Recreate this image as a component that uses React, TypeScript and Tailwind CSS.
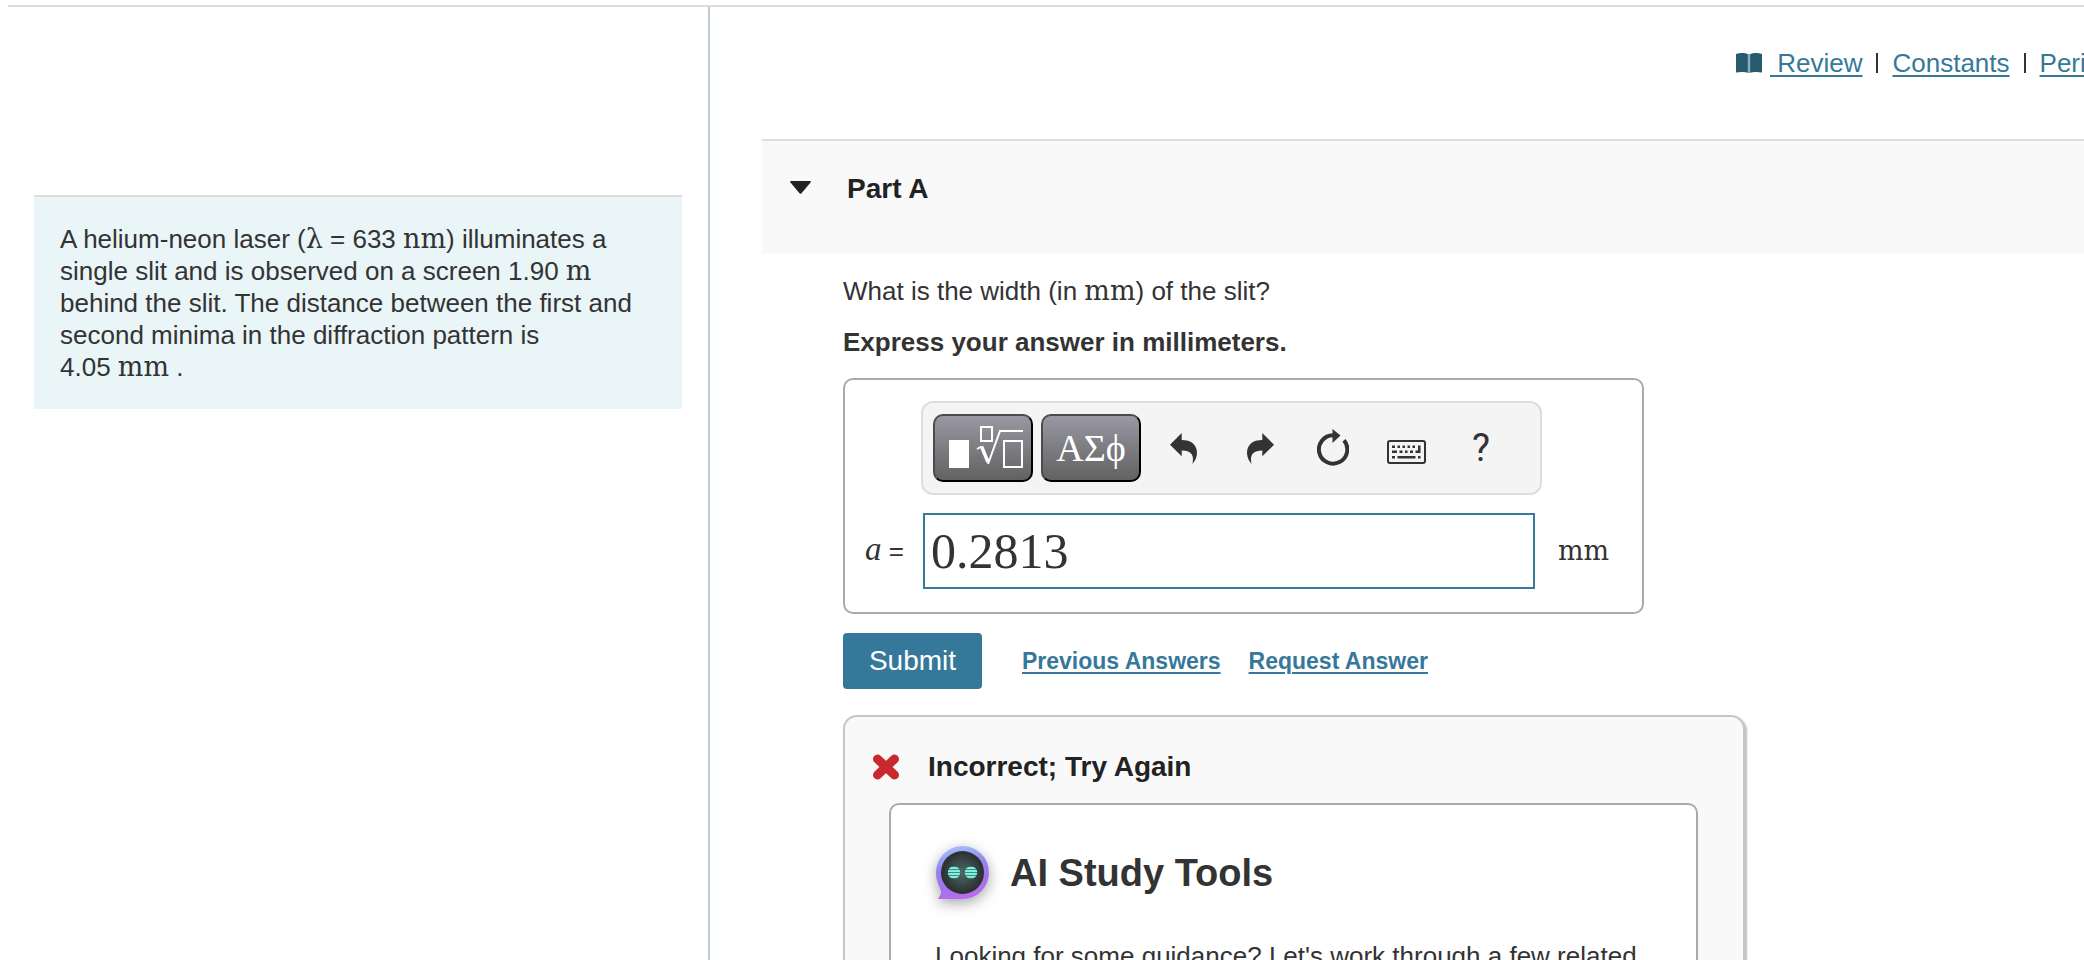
import { useState } from "react";
import type { ReactNode } from "react";

interface IToolButton {
  label: string;
  children: ReactNode;
  className?: string;
}

function Unit({ children }: { children: ReactNode }) {
  return (
    <span className="font-['DejaVu_Serif',serif] text-[27px] leading-none">
      {children}
    </span>
  );
}

function BookIcon() {
  return (
    <svg viewBox="0 0 26 20" className="w-[26px] h-5" fill="#265a6e">
      <path d="M0 1C4-.3 9-.3 12.300 1.500V20C9 18.600 4 18.600 0 19.600Z" />
      <path d="M26 1C22-.3 17-.3 13.700 1.500V20C17 18.600 22 18.600 26 19.600Z" />
      <path d="M13 1V20" stroke="#8fadb9" strokeWidth="2.400" />
    </svg>
  );
}

function TemplatesIcon() {
  return (
    <svg
      viewBox="0 0 96 64"
      className="w-24 h-16"
      fill="none"
      stroke="#fff"
      strokeWidth="2"
    >
      <rect x="14" y="24" width="20" height="28" fill="#fff" stroke="none" />
      <rect x="46" y="11" width="11" height="14" />
      <path d="M42 33L46.500 30.500" />
      <path d="M46.500 30.500L53 46" strokeWidth="3.500" />
      <path d="M53 48L65 15H88" />
      <rect x="69" y="25" width="18" height="26" />
    </svg>
  );
}

function UndoIcon({ className = "" }: { className?: string }) {
  return (
    <svg
      viewBox="0 0 27 31"
      className={`w-[27px] h-[31px] ${className}`}
      fill="#333"
    >
      <path d="M0 11.700L11.700 0V7C21 7 27 11.500 27 20C27 24 25 28 22.500 31C24 23 22.500 17.500 11.700 17.500V23.300Z" />
    </svg>
  );
}

function ResetIcon() {
  return (
    <svg viewBox="0 0 32 38" className="w-8 h-[38px]" fill="none">
      <path
        d="M27 11.300A14.200 14.200 0 1 1 16 6.200"
        stroke="#333"
        strokeWidth="4"
      />
      <path d="M15.500 0L23.500 6.500L15.500 14Z" fill="#333" />
    </svg>
  );
}

function KeyboardIcon() {
  return (
    <svg viewBox="0 0 39 24" className="w-[39px] h-6" fill="#333">
      <rect
        x="1"
        y="1"
        width="37"
        height="22"
        rx="2"
        fill="none"
        stroke="#333"
        strokeWidth="2"
      />
      <path d="M5 5.500h3v2.500H5zM10.500 5.500h2.500v2.500h-2.500zM15.500 5.500h2.500v2.500h-2.500zM20.500 5.500h2.500v2.500h-2.500zM25.500 5.500h2.500v2.500h-2.500z" />
      <path d="M5 10.500h5v2.500H5zM12.500 10.500h3v2.500h-3zM18 10.500h2.500v2.500H18zM23 10.500h3v2.500h-3zM28.500 10.500h2.500V5.500h2.500v7.500h-5z" />
      <path d="M5 16h3v2.500H5zM10.500 16h18v2.500h-18zM31 16h2.500v2.500H31z" />
    </svg>
  );
}

function WrongIcon() {
  return (
    <svg viewBox="0 0 28 26" className="w-7 h-[26px]">
      <path
        d="M5.500 5L22.500 21M22.500 5L5.500 21"
        stroke="#c9292d"
        strokeWidth="9"
        strokeLinecap="round"
      />
    </svg>
  );
}

function BotIcon() {
  return (
    <svg
      viewBox="0 0 53 53"
      className="w-[53px] h-[53px] overflow-visible drop-shadow-[0_4px_7px_rgba(0,0,0,0.35)]"
    >
      <defs>
        <linearGradient id="bubble" x1="0.3" y1="0" x2="0.5" y2="1">
          <stop offset="0" stopColor="#a5c0fa" />
          <stop offset="0.4" stopColor="#9383ee" />
          <stop offset="0.7" stopColor="#a273ee" />
          <stop offset="1" stopColor="#bb6bee" />
        </linearGradient>
        <radialGradient id="face">
          <stop offset="0" stopColor="#4d6b68" />
          <stop offset="1" stopColor="#2a2d2e" />
        </radialGradient>
        <pattern
          id="scan"
          width="4"
          height="3"
          patternUnits="userSpaceOnUse"
        >
          <rect width="4" height="2" fill="#7df0dd" />
          <rect y="2" width="4" height="1" fill="#4a8a82" />
        </pattern>
      </defs>
      <path
        d="M26.500 0A26.500 26.500 0 0 1 26.500 53H2.500C1.500 52 5 50 5 46C5 42 0 37 0 26.500A26.500 26.500 0 0 1 26.500 0Z"
        fill="url(#bubble)"
      />
      <circle cx="26.500" cy="26.500" r="21.500" fill="url(#face)" />
      <circle cx="18" cy="26.500" r="6.200" fill="url(#scan)" />
      <circle cx="35" cy="26.500" r="6.200" fill="url(#scan)" />
    </svg>
  );
}

function PaletteButton({ label, children, className = "" }: IToolButton) {
  return (
    <button
      type="button"
      aria-label={label}
      className={`w-[100px] h-[68px] flex items-center justify-center rounded-[10px] border-2 border-t-[#4b4b4b] border-l-[#4b4b4b] border-r-black border-b-black bg-linear-to-b from-[#9a98a3] to-[#626262] text-white ${className}`}
    >
      {children}
    </button>
  );
}

function ToolButton({ label, children, className = "" }: IToolButton) {
  return (
    <button
      type="button"
      aria-label={label}
      className={`flex items-center justify-center ${className}`}
    >
      {children}
    </button>
  );
}

function ProblemPanel() {
  return (
    <aside className="w-[710px] shrink-0 border-r-2 border-[#bccad6]">
      <div className="mt-[188px] ml-[34px] mr-[26px] py-[26px] pl-[26px] pr-10 border-t-2 border-[#ddd] bg-[#eaf5f8]">
        <p className="leading-8">
          A helium-neon laser (<Unit>λ</Unit> = 633 <Unit>nm</Unit>) illuminates
          a single slit and is observed on a screen 1.90 <Unit>m</Unit> behind
          the slit. The distance between the first and second minima in the
          diffraction pattern is 4.05&nbsp;<Unit>mm</Unit> .
        </p>
      </div>
    </aside>
  );
}

function ResourceLinks() {
  const link = "text-[#36789a] underline decoration-2 underline-offset-3";

  return (
    <nav className="h-[132px] pt-10 flex justify-end">
      <div className="w-[348px] h-8 flex items-center gap-[14px] whitespace-nowrap overflow-hidden">
        <div className="flex items-center gap-2">
          <BookIcon />
          <a href="#review" className={link}>
            &nbsp;Review
          </a>
        </div>
        <span className="w-[2px] h-5 shrink-0 bg-[#333]" />
        <a href="#constants" className={link}>
          Constants
        </a>
        <span className="w-[2px] h-5 shrink-0 bg-[#333]" />
        <a href="#periodic-table" className={link}>
          Periodic Table
        </a>
      </div>
    </nav>
  );
}

function AnswerBox() {
  const [answer, setAnswer] = useState("0.2813");

  return (
    <div className="w-[801px] h-[236px] mt-5 pt-[21px] border-2 border-[#aaa] rounded-[10px]">
      <div className="ml-[76px] w-[621px] h-[94px] pl-[10px] flex items-center border-2 border-[#ddd] rounded-xl bg-[#f4f4f4]">
        <PaletteButton label="Templates">
          <TemplatesIcon />
        </PaletteButton>
        <PaletteButton
          label="Symbols"
          className="ml-2 font-['Liberation_Serif',serif] text-[38px] leading-10"
        >
          ΑΣϕ
        </PaletteButton>
        <div className="ml-[29px] flex items-center">
          <ToolButton label="Undo">
            <UndoIcon />
          </ToolButton>
          <ToolButton label="Redo" className="ml-[50px]">
            <UndoIcon className="-scale-x-100" />
          </ToolButton>
          <ToolButton label="Reset" className="ml-[43px]">
            <ResetIcon />
          </ToolButton>
          <ToolButton label="Keyboard shortcuts" className="ml-[38px] pt-2">
            <KeyboardIcon />
          </ToolButton>
          <ToolButton
            label="Help"
            className="ml-[46px] font-[Roboto,sans-serif] text-[38px] leading-10"
          >
            ?
          </ToolButton>
        </div>
      </div>
      <div className="mt-[18px] flex items-center">
        <label htmlFor="answer" className="w-[78px] pl-5 whitespace-nowrap">
          <span className="font-['Liberation_Serif',serif] text-[33px] leading-none italic">
            a
          </span>{" "}
          =
        </label>
        <input
          id="answer"
          value={answer}
          onChange={(e) => setAnswer(e.target.value)}
          className="w-[612px] h-[76px] px-[6px] border-2 border-[#367a9c] outline-none font-['Liberation_Serif',serif] text-[50px]"
        />
        <span className="ml-[23px]">
          <Unit>mm</Unit>
        </span>
      </div>
    </div>
  );
}

function Feedback() {
  return (
    <div className="w-[902px] mt-[26px] pt-[26px] pb-12 pl-11 pr-[45px] border-2 border-[#c6c6c6] rounded-[14px] bg-[#f9f9f9] shadow-[2px_2px_2px_rgba(0,0,0,0.25)]">
      <div className="-ml-[17px] h-[60px] pb-3 flex items-center gap-7">
        <WrongIcon />
        <h3 className="text-[28px] leading-8 font-bold text-[#222]">
          Incorrect; Try Again
        </h3>
      </div>
      <div className="pt-[41px] px-11 pb-11 border-2 border-[#aaa] rounded-[10px] bg-white">
        <div className="ml-px flex items-center gap-[21px]">
          <BotIcon />
          <h4 className="text-[38px] leading-[50px] font-bold">
            AI Study Tools
          </h4>
        </div>
        <p className="mt-[41px] leading-8">
          Looking for some guidance? Let's work through a few related practice
          questions before you go back to the real thing.
        </p>
      </div>
    </div>
  );
}

function PartA() {
  const [open, setOpen] = useState(true);

  return (
    <section className="ml-[52px]">
      <div className="h-[115px] pt-8 pl-7 border-t-2 border-[#ddd] bg-[#f9f9f9]">
        <button
          type="button"
          aria-expanded={open}
          onClick={() => setOpen(!open)}
          className="flex items-center gap-9 text-[28px] leading-8 font-bold text-[#222]"
        >
          <svg
            viewBox="0 0 21 13"
            className="w-[21px] h-[13px] mb-1"
            fill="#222"
          >
            <path d="M1 0H20Q21.500 0 20.500 1.500L11.500 12.200Q10.500 13.400 9.500 12.200L.5 1.500Q-.5 0 1 0Z" />
          </svg>
          Part A
        </button>
      </div>
      {open ? (
        <div className="pl-[81px] pt-[21px]">
          <p className="leading-8">
            What is the width (in <Unit>mm</Unit>) of the slit?
          </p>
          <p className="mt-[19px] leading-8 font-bold">
            Express your answer in millimeters.
          </p>
          <AnswerBox />
          <div className="mt-[19px] flex items-center text-[23px] font-bold">
            <button
              type="button"
              className="w-[139px] h-14 rounded-sm bg-[#36789a] text-[28px] font-normal text-white"
            >
              Submit
            </button>
            <a
              href="#previous"
              className="ml-10 text-[#36789a] underline decoration-2 underline-offset-3"
            >
              Previous Answers
            </a>
            <a
              href="#request"
              className="ml-7 text-[#36789a] underline decoration-2 underline-offset-3"
            >
              Request Answer
            </a>
          </div>
          <Feedback />
        </div>
      ) : null}
    </section>
  );
}

function App() {
  return (
    <div className="h-screen pt-[5px] flex flex-col overflow-hidden bg-white font-['Liberation_Sans',sans-serif] text-[26px] text-[#333]">
      <div className="ml-2 h-[2px] shrink-0 bg-[#ddd]" />
      <div className="flex-1 min-h-0 flex">
        <ProblemPanel />
        <main className="flex-1 min-w-0">
          <ResourceLinks />
          <PartA />
        </main>
      </div>
    </div>
  );
}

export default App;
